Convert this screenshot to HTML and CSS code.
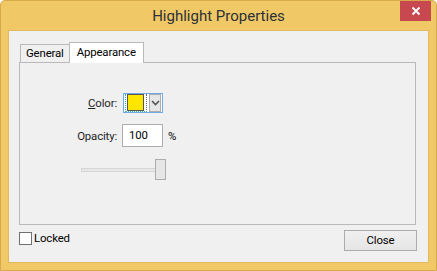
FILE: index.html
```html
<!DOCTYPE html>
<html>
<head>
<meta charset="utf-8">
<link rel="stylesheet" href="styles.css">
</head>
<body>
<div class="window">
  <div class="titlebar">
    <div class="title">Highlight Properties</div>
    <div class="close-x"><svg width="10" height="10" viewBox="0 0 10 10"><path d="M1.5 1.5 L8.5 8.5 M8.5 1.5 L1.5 8.5" stroke="#fff" stroke-width="1.8"/></svg></div>
  </div>
  <div class="client">
    <div class="tabs">
      <div class="tab">General</div>
      <div class="tab active">Appearance</div>
    </div>
    <div class="panel">
      <div class="form">
        <label class="lbl"><u>C</u>olor:</label>
        <div class="combo">
          <div class="swatch-wrap"><div class="swatch"></div></div>
          <div class="drop"><svg width="9" height="6" viewBox="0 0 9 6"><path d="M1 1 L4.5 4.5 L8 1" fill="none" stroke="#555" stroke-width="1.6"/></svg></div>
        </div>
        <label class="lbl">Opacity:</label>
        <div class="opacity-row">
          <div class="input">100</div>
          <span class="pct">%</span>
        </div>
      </div>
      <div class="slider">
        <div class="track"></div>
        <div class="thumb"></div>
      </div>
    </div>
    <div class="footer">
      <div class="check"><span class="box"></span><span>Locked</span></div>
      <div class="button">Close</div>
    </div>
  </div>
</div>
</body>
</html>
```
FILE: styles.css
```css
* { box-sizing: border-box; }
html, body { margin: 0; padding: 0; }
body {
  width: 437px; height: 271px; overflow: hidden;
  background: #fff;
  font-family: "Roboto", "Noto Sans", sans-serif;
  font-size: 11.4px;
  letter-spacing: -0.15px;
  color: #000;
}
.window {
  width: 437px; height: 271px;
  background: #f0c866;
  border: 1px solid #d7a94a;
  border-radius: 5px 5px 0 0;
  display: flex; flex-direction: column;
  padding: 0 7px 7px 7px;
}
.titlebar {
  height: 29px;
  position: relative;
  display: flex; align-items: center; justify-content: center;
}
.title {
  font-size: 15px;
  letter-spacing: 0;
  color: #2c3038;
  margin-top: 1px;
}
.close-x {
  position: absolute; right: -2px; top: 0;
  width: 31px; height: 20px;
  background: #c7484f;
  display: flex; align-items: center; justify-content: center;
}
.client {
  flex: 1;
  background: #f0f0f0;
  border: 1px solid #e2b860;
  padding: 11px 12px 0 10px;
  display: flex; flex-direction: column;
}
.tabs { display: flex; align-items: flex-end; height: 20px; padding-left: 1px; }
.tab {
  height: 18px;
  border: 1px solid #b9b9b9; border-bottom: none;
  padding: 0 5px;
  line-height: 17px;
  background: #f0f0f0;
  color: #000;
}
.tab + .tab { margin-left: -1px; }
.tab.active {
  height: 21px; margin-bottom: -1px;
  background: #fff;
  position: relative; z-index: 1;
  padding: 0 7px;
  line-height: 18px;
}
.panel {
  height: 163px;
  border: 1px solid #b9b9b9;
  background: #f0f0f0;
  padding: 30px 0 0 57px;
}
.form {
  display: grid;
  grid-template-columns: 40px auto;
  column-gap: 5px;
  row-gap: 11px;
  align-items: center;
}
.lbl { text-align: right; color: #1e1e1e; white-space: nowrap; }
.lbl u { text-decoration: underline; }
.combo {
  width: 40px; height: 20px;
  margin-left: 1px;
  border: 1px solid #6fa9e6;
  display: flex;
  background: #fff;
  padding: 0 1px 0 1px;
}
.swatch-wrap {
  width: 22px; height: 100%;
  padding: 0 2px 1px 1px;
  border: 1px dotted #2fb89c;
  border-right-color: #666;
  border-top: none;
  display: flex; align-items: center;
}
.swatch { width: 18px; height: 17px; background: #ffe600; border: 1px solid #555; }
.drop {
  width: 13px;
  margin: 0 0 0 2px;
  height: 18px;
  background: #e6e6e6;
  border: 1px solid #acacac;
  display: flex; align-items: center; justify-content: center;
}
.opacity-row { display: flex; align-items: center; }
.input {
  width: 41px; height: 23px;
  border: 1px solid #abadb3;
  background: #fff;
  padding-left: 6px;
  line-height: 21px;
}
.pct { margin-left: 5px; }
.slider {
  position: relative;
  margin-top: 12px; margin-left: 4px;
  width: 86px; height: 21px;
}
.track {
  position: absolute; left: 0; right: 2px; top: 9px; height: 4px;
  background: #e7e7e7; border: 1px solid #d6d6d6;
}
.thumb {
  position: absolute; left: 74px; top: 0;
  width: 11px; height: 21px;
  background: #e6e6e6; border: 1px solid #acacac;
}
.footer {
  display: flex; justify-content: space-between; align-items: flex-start;
  margin-top: 5px;
}
.check { display: flex; align-items: center; margin-top: 1px; margin-left: 0; }
.box { width: 13px; height: 13px; border: 1px solid #707070; background: #fff; margin-right: 2px; }
.button {
  width: 73px; height: 21px;
  border: 1px solid #acacac;
  background: linear-gradient(#f0f0f0, #e5e5e5);
  text-align: center;
  line-height: 19px;
  margin-right: -1px;
}
```
